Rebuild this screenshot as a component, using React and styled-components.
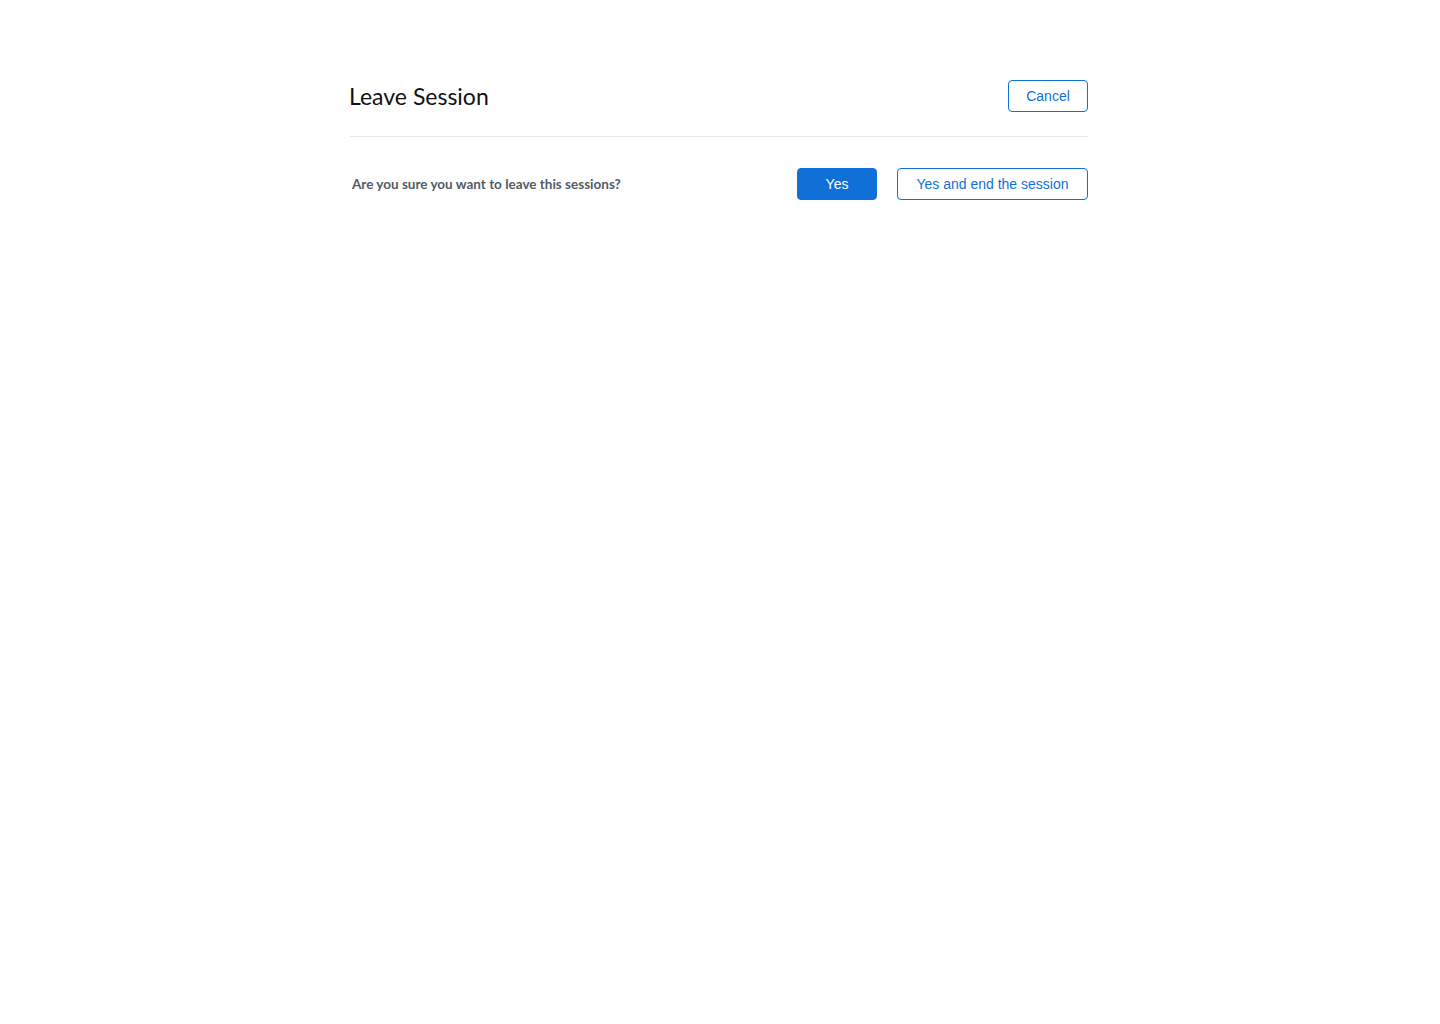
import React from "react";
import styled, { createGlobalStyle } from "styled-components";

const GlobalStyle = createGlobalStyle`
  body {
    margin: 0;
    background: #ffffff;
    font-family: "Lato", "Liberation Sans", sans-serif;
  }
`;

const StyledDialog = styled.section`
  width: 738px;
  margin: 0 auto;
  padding-top: 80px;
  box-sizing: border-box;
  transform: translateX(-1px);
`;

const StyledHeader = styled.header`
  display: flex;
  justify-content: space-between;
  align-items: center;
  padding-bottom: 24px;
  border-bottom: 1px solid #e3e8ee;
`;

const StyledTitle = styled.h1`
  margin: 0 0 0 -1px;
  font-family: "Lato", "Liberation Sans", sans-serif;
  font-weight: 400;
  font-size: 23px;
  line-height: 32px;
  color: #111111;
`;

const StyledRow = styled.div`
  display: flex;
  align-items: center;
  margin-top: 31px;
`;

const StyledQuestion = styled.p`
  flex: 1;
  margin: 0 0 0 2px;
  font-size: 13.5px;
  font-weight: 700;
  color: #525c68;
`;

const StyledActions = styled.div`
  display: flex;
  gap: 20px;
`;

const StyledButton = styled.button`
  height: 32px;
  width: ${({ $width }) => $width}px;
  padding: 0;
  box-sizing: border-box;
  border-radius: 4px;
  border: 1px solid #1170d8;
  font-family: "Liberation Sans", Arial, sans-serif;
  font-size: 14px;
  cursor: pointer;
  background: ${({ $primary }) => ($primary ? "#1170d8" : "#ffffff")};
  color: ${({ $primary }) => ($primary ? "#ffffff" : "#1170d8")};
`;

const App = () => {
  return (
    <>
      <GlobalStyle />
      <StyledDialog>
        <StyledHeader>
          <StyledTitle>Leave Session</StyledTitle>
          <StyledButton $width={80}>Cancel</StyledButton>
        </StyledHeader>
        <StyledRow>
          <StyledQuestion>Are you sure you want to leave this sessions?</StyledQuestion>
          <StyledActions>
            <StyledButton $primary $width={80}>
              Yes
            </StyledButton>
            <StyledButton $width={191}>Yes and end the session</StyledButton>
          </StyledActions>
        </StyledRow>
      </StyledDialog>
    </>
  );
};

export default App;
